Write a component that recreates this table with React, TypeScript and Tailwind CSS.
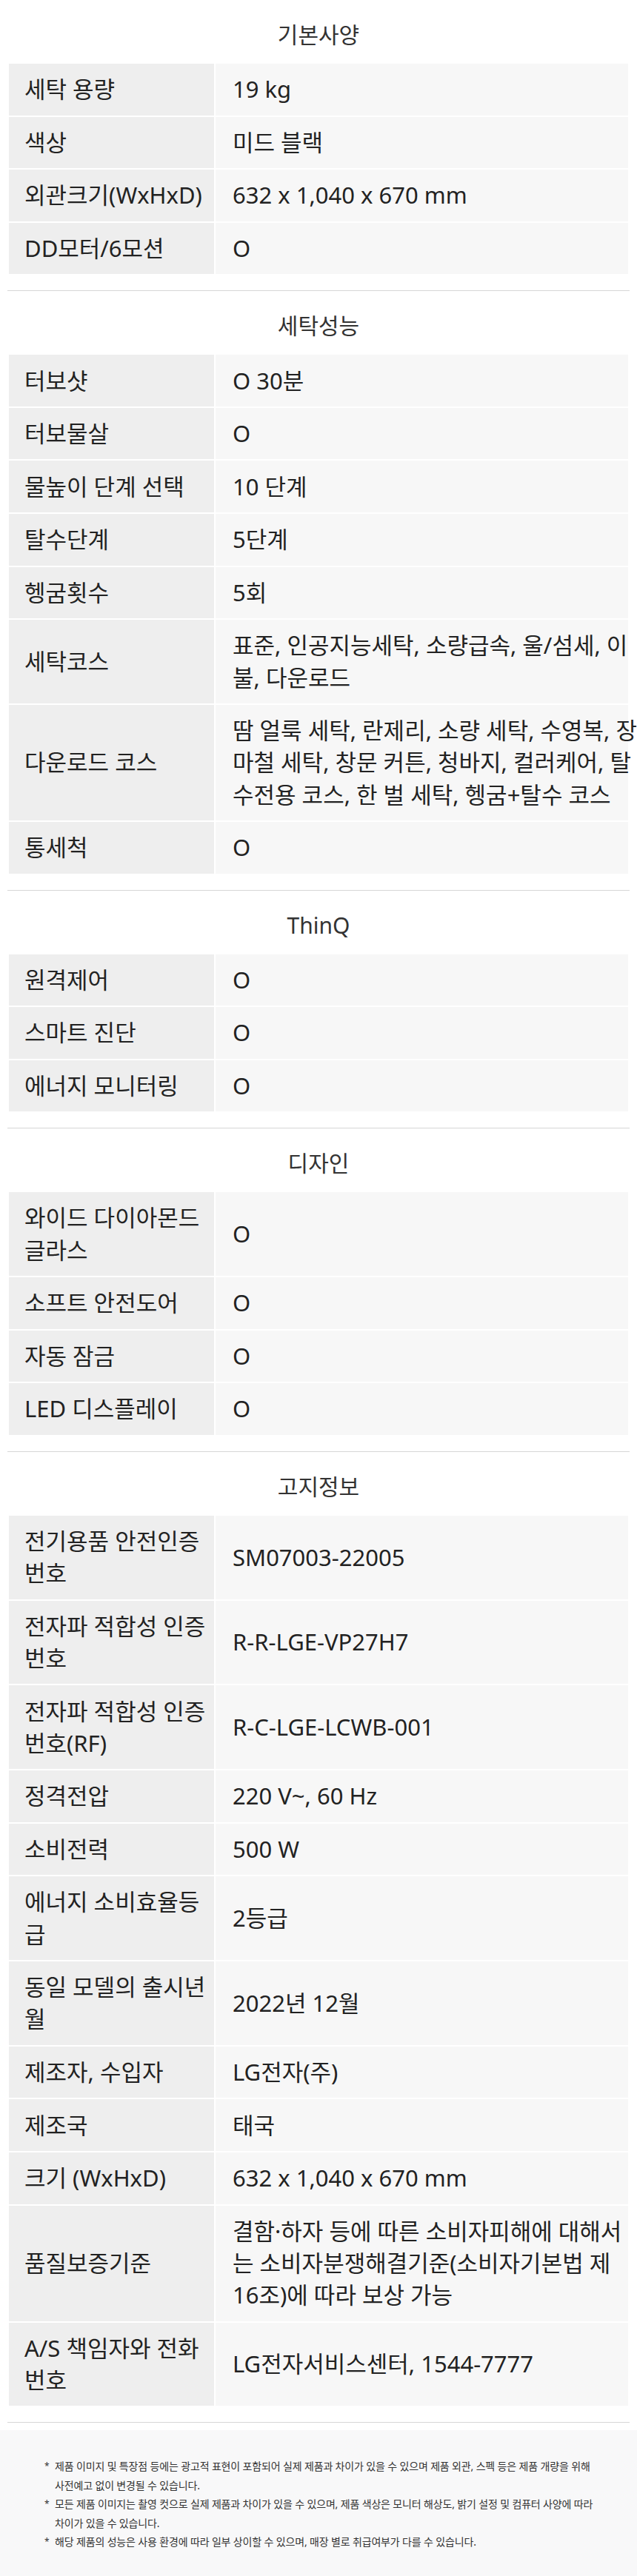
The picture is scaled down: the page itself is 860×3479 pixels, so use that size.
import React from 'react';

// a cell is one line, or several lines broken where the original breaks them
type Cell = string | string[];
type Row = [Cell, Cell];

const sections: { title: string; rows: Row[] }[] = [
  {
    title: '기본사양',
    rows: [
      ['세탁 용량', '19 kg'],
      ['색상', '미드 블랙'],
      ['외관크기(WxHxD)', '632 x 1,040 x 670 mm'],
      ['DD모터/6모션', 'O'],
    ],
  },
  {
    title: '세탁성능',
    rows: [
      ['터보샷', 'O 30분'],
      ['터보물살', 'O'],
      ['물높이 단계 선택', '10 단계'],
      ['탈수단계', '5단계'],
      ['헹굼횟수', '5회'],
      ['세탁코스', ['표준, 인공지능세탁, 소량급속, 울/섬세, 이', '불, 다운로드']],
      [
        '다운로드 코스',
        ['땀 얼룩 세탁, 란제리, 소량 세탁, 수영복, 장', '마철 세탁, 창문 커튼, 청바지, 컬러케어, 탈', '수전용 코스, 한 벌 세탁, 헹굼+탈수 코스'],
      ],
      ['통세척', 'O'],
    ],
  },
  {
    title: 'ThinQ',
    rows: [
      ['원격제어', 'O'],
      ['스마트 진단', 'O'],
      ['에너지 모니터링', 'O'],
    ],
  },
  {
    title: '디자인',
    rows: [
      [['와이드 다이아몬드', '글라스'], 'O'],
      ['소프트 안전도어', 'O'],
      ['자동 잠금', 'O'],
      ['LED 디스플레이', 'O'],
    ],
  },
  {
    title: '고지정보',
    rows: [
      [['전기용품 안전인증', '번호'], 'SM07003-22005'],
      [['전자파 적합성 인증', '번호'], 'R-R-LGE-VP27H7'],
      [['전자파 적합성 인증', '번호(RF)'], 'R-C-LGE-LCWB-001'],
      ['정격전압', '220 V~, 60 Hz'],
      ['소비전력', '500 W'],
      [['에너지 소비효율등', '급'], '2등급'],
      [['동일 모델의 출시년', '월'], '2022년 12월'],
      ['제조자, 수입자', 'LG전자(주)'],
      ['제조국', '태국'],
      ['크기 (WxHxD)', '632 x 1,040 x 670 mm'],
      [
        '품질보증기준',
        ['결함·하자 등에 따른 소비자피해에 대해서', '는 소비자분쟁해결기준(소비자기본법 제', '16조)에 따라 보상 가능'],
      ],
      [['A/S 책임자와 전화', '번호'], 'LG전자서비스센터, 1544-7777'],
    ],
  },
];

const notes = [
  ['제품 이미지 및 특장점 등에는 광고적 표현이 포함되어 실제 제품과 차이가 있을 수 있으며 제품 외관, 스펙 등은 제품 개량을 위해', '사전예고 없이 변경될 수 있습니다.'],
  ['모든 제품 이미지는 촬영 컷으로 실제 제품과 차이가 있을 수 있으며, 제품 색상은 모니터 해상도, 밝기 설정 및 컴퓨터 사양에 따라', '차이가 있을 수 있습니다.'],
  ['해당 제품의 성능은 사용 환경에 따라 일부 상이할 수 있으며, 매장 별로 취급여부가 다를 수 있습니다.'],
];

const Lines = ({ value }: { value: Cell }) => {
  const lines = typeof value === 'string' ? [value] : value;
  return (
    <>
      {lines.map(line => (
        <span key={line} className="block whitespace-nowrap">
          {line}
        </span>
      ))}
    </>
  );
};

const SpecSection = ({ title, rows }: { title: string; rows: Row[] }) => {
  return (
    <section className="mx-[10px] pt-[27px] pb-[20px] border-b border-[#d6d6d6]">
      <h3 className="text-center text-[30px] leading-[40px] mb-[17px] text-[#333]">{title}</h3>
      <table className="w-full table-fixed border-separate border-spacing-[2px]">
        <tbody>
          {rows.map(([label, value], i) => (
            <tr key={i}>
              <th className="w-[277px] bg-[#eeeeee] pl-[21px] pr-[8px] py-[13.2px] text-left font-normal align-middle">
                <Lines value={label} />
              </th>
              <td className="bg-[#f7f7f7] pl-[23px] pr-[2px] py-[13.2px] align-middle">
                <Lines value={value} />
              </td>
            </tr>
          ))}
        </tbody>
      </table>
    </section>
  );
};

export default function App() {
  return (
    <div className="w-[860px] bg-white text-[#222] text-[31px] leading-[43.2px] font-['Noto_Sans','Noto_Sans_CJK_KR',sans-serif]">
      {sections.map(s => (
        <SpecSection key={s.title} {...s} />
      ))}

      {/* notice */}
      <footer className="mt-[10px] h-[200px] bg-[#f8f8f9] pl-[60px] pr-[10px] pt-[36px] text-[14px] leading-[25.5px] tracking-[-0.15px] text-[#333]">
        <ul>
          {notes.map(n => (
            <li key={n[0]} className="flex">
              <span className="w-[14px] shrink-0 text-[12px]">*</span>
              <span>
                <Lines value={n} />
              </span>
            </li>
          ))}
        </ul>
      </footer>
    </div>
  );
}
